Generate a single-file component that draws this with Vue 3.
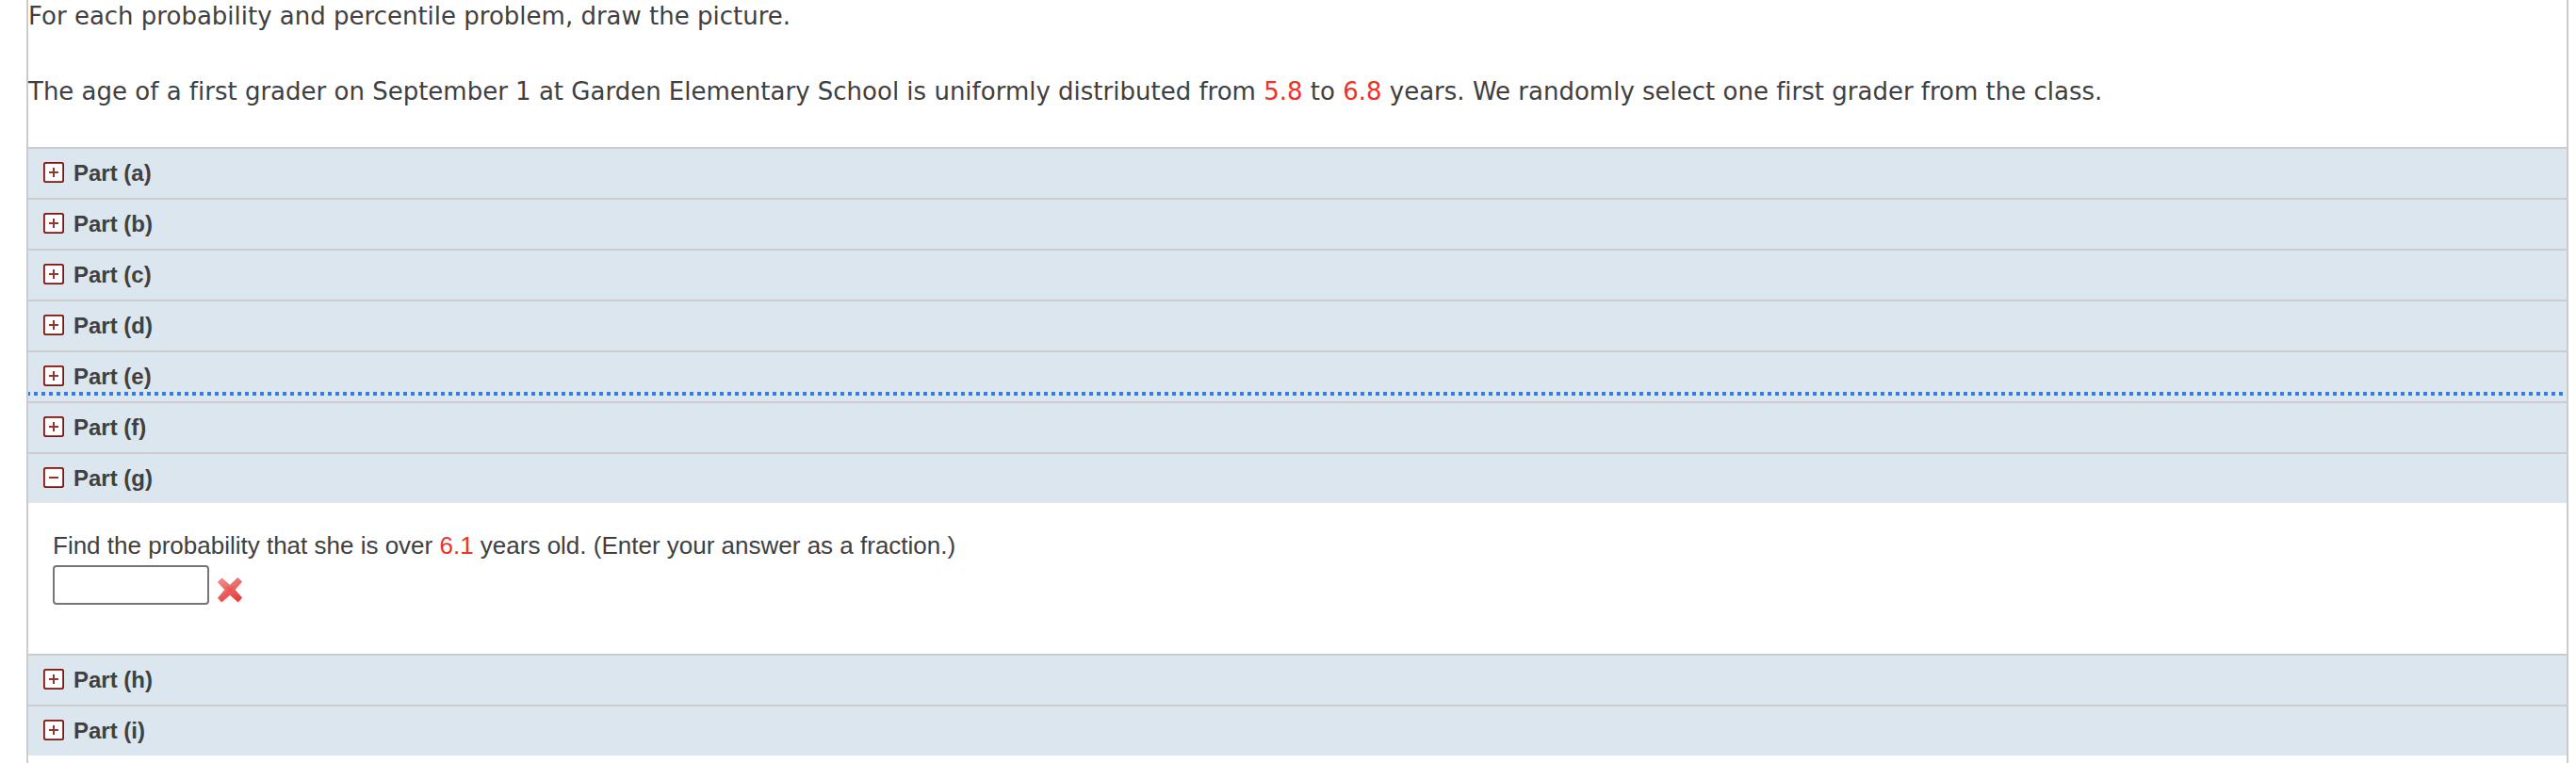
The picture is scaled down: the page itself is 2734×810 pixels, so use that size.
<template>
  <main class="question">
    <div class="question__intro">
      <p>For each probability and percentile problem, draw the picture.</p>
      <p>
        The age of a first grader on September 1 at Garden Elementary School is uniformly distributed from
        <span class="value">5.8</span> to <span class="value">6.8</span> years. We randomly select one first grader from the class.
      </p>
    </div>

    <section v-for="part in parts" :key="part.id" class="part">
      <h2 class="part__title">
        <button
          type="button"
          class="part__header"
          :class="{ 'part__header--marked': part.id === 'e' }"
          :aria-expanded="part.open"
          @click="part.open = !part.open"
        >
          <svg class="part__icon" viewBox="0 0 22 22" fill="none" aria-hidden="true">
            <rect x="1" y="1" width="20" height="20" rx="2" fill="#fff" stroke="#b87c78" stroke-width="2"/>
            <rect x="0.75" y="0.75" width="20.5" height="20.5" rx="2" stroke="#7f130d" stroke-width="1.5"/>
            <path d="M6 11h10" stroke="#963530" stroke-width="2"/>
            <path v-if="!part.open" d="M11 6v10" stroke="#963530" stroke-width="2"/>
          </svg>
          <span>Part ({{ part.id }})</span>
        </button>
      </h2>

      <div v-if="part.open && part.id === 'g'" class="part__body">
        <label for="answer-g">
          Find the probability that she is over <span class="value">6.1</span> years old. (Enter your answer as a fraction.)
        </label>
        <div class="answer">
          <input id="answer-g" v-model="answer" class="answer__input" type="text" autocomplete="off">
          <svg class="answer__mark" viewBox="0 0 26 26" fill="none" role="img" aria-label="Incorrect">
            <defs>
              <linearGradient id="markFill" gradientUnits="userSpaceOnUse" x1="6" y1="0" x2="18" y2="26">
                <stop offset="0%" stop-color="#f28a89"/>
                <stop offset="55%" stop-color="#ea6260"/>
                <stop offset="100%" stop-color="#dd403c"/>
              </linearGradient>
            </defs>
            <path
              d="M4.6 1.8 13 9.2 21.4 1.2 24.8 4.6 17.2 13 24.8 21.6 21.6 25 13 17.6 4.4 25 1.2 21.8 8.8 13 1.2 5Z"
              fill="url(#markFill)"
              stroke="url(#markFill)"
              stroke-width="2"
              stroke-linejoin="round"
            />
            <path d="m10 10 6 6m0-6-6 6" stroke="#e94a48" stroke-width="2" opacity="0.5"/>
          </svg>
        </div>
      </div>
    </section>
  </main>
</template>

<script setup>
import { reactive, ref } from 'vue'

const answer = ref('')

const parts = reactive(
  ['a', 'b', 'c', 'd', 'e', 'f', 'g', 'h', 'i'].map((id) => ({ id, open: id === 'g' })),
)
</script>

<style>
body {
  margin: 0;
  background: #fff;
}
</style>

<style scoped>
.question {
  box-sizing: border-box;
  min-height: 100vh;
  margin: 0 8px 0 28px;
  border: solid #ccc;
  border-width: 0 2px;
  color: #404040;
  font-family: "Liberation Sans", Arial, sans-serif;
  font-size: 26px;
  font-variant-ligatures: none;
}

.question__intro {
  display: flex;
  flex-direction: column;
  gap: 46px;
  padding-bottom: 42px;
  font-family: Verdana, "DejaVu Sans", sans-serif;
  line-height: 34px;
}

.question__intro p {
  margin: 0;
}

.value {
  color: #ee3224;
}

.part {
  border-top: 2px solid #ccc;
}

.part__title {
  margin: 0;
  font-size: 24px;
}

.part__header {
  position: relative;
  display: flex;
  align-items: flex-start;
  gap: 10px;
  width: 100%;
  padding: 14px 16px;
  border: 0;
  background: #dce6ee;
  color: inherit;
  font: inherit;
  line-height: 24px;
  text-align: left;
  cursor: pointer;
}

/* dotted rule laid over the lower edge of the row */
.part__header--marked::after {
  content: "";
  position: absolute;
  right: 0;
  bottom: 6px;
  left: 0;
  height: 4px;
  background: repeating-linear-gradient(90deg, #357edd 0 4px, transparent 4px 8px) -2px 0 / 8px 4px;
}

.part__icon {
  flex-shrink: 0;
  width: 22px;
  height: 22px;
}

.part__body {
  padding: 29px 26px 52px;
  line-height: 32px;
}

.part__body label {
  display: block;
}

.answer {
  display: flex;
  align-items: flex-end;
  gap: 9px;
  margin-top: 5px;
}

.answer__input {
  box-sizing: border-box;
  width: 166px;
  height: 42px;
  padding: 2px 6px;
  border: 2px solid #767676;
  border-radius: 4px;
  background: #fff;
  color: inherit;
  font: inherit;
}

.answer__mark {
  width: 26px;
  height: 26px;
  margin-bottom: 3px;
}
</style>
